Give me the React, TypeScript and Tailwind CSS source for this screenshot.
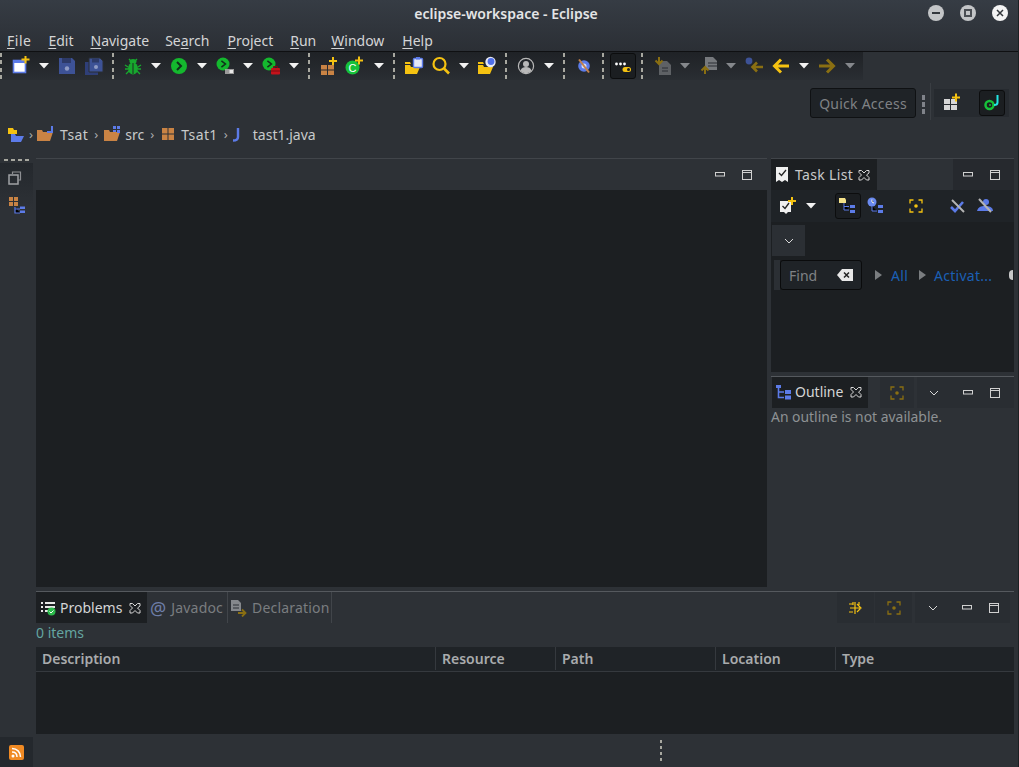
import React from "react";

const S = ({ w = 20, h = 20, vb, className, children }: { w?: number; h?: number; vb?: string; className?: string; children: React.ReactNode }) => (
  <svg width={w} height={h} viewBox={vb ?? `0 0 ${w} ${h}`} className={`shrink-0 ${className ?? ""}`} fill="none">{children}</svg>
);

const Plus = ({ x, y, c = "#f5c211" }: { x: number; y: number; c?: string }) => (
  <path d={`M${x - 4} ${y}h8M${x} ${y - 4}v8`} stroke={c} strokeWidth="2" />
);
const NewIcon = () => (<S><rect x="3.5" y="4.5" width="12" height="12" fill="#fff" stroke="#5c7be8" strokeWidth="1.6" /><rect x="3" y="4" width="13" height="3" fill="#5c7be8" /><Plus x={15.5} y={3.5} /></S>);
const Save = () => (<S><path d="M2 2h13l3 3v13H2z" fill="#3d5296" /><rect x="5" y="2" width="9" height="5" fill="#2d3a68" /><circle cx="10" cy="12.5" r="2.2" fill="#8f9bc4" /></S>);
const SaveAll = () => (<S><path d="M1 6h13v13H1z" fill="#2f3f78" /><path d="M5 2h11l3 3v11H5z" fill="#3d5296" stroke="#2b2f35" /><rect x="8" y="2.5" width="7" height="4" fill="#2d3a68" /><circle cx="12" cy="11" r="2" fill="#8f9bc4" /></S>);
const Bug = () => (<S><path d="M6 3l2 2M14 3l-2 2M2 9l3 2M18 9l-3 2M2 13h3M18 13h-3M3 18l3-3M17 18l-3-3" stroke="#17a82e" strokeWidth="1.4" /><ellipse cx="10" cy="5.5" rx="3.5" ry="2.5" fill="#17a82e" /><ellipse cx="10" cy="12.5" rx="5" ry="6" fill="#17a82e" /><path d="M10 7v11" stroke="#1f2a22" /></S>);
const Chev = ({ x, y, s = 1 }: { x: number; y: number; s?: number }) => (
  <path d={`M${x - 2 * s} ${y - 4 * s}l4 ${4 * s}l-4 ${4 * s}`} stroke="#10301a" strokeWidth={2 * s} fill="none" />
);
const Run = () => (<S><circle cx="10" cy="10" r="8" fill="#14b82e" /><Chev x={10} y={10} /></S>);
const Cov = () => (<S><circle cx="8" cy="8" r="6.5" fill="#14b82e" /><Chev x={8} y={8} s={0.8} /><rect x="10.5" y="13.5" width="8" height="4" fill="#e8e8e8" stroke="#9a9a9a" /><rect x="11" y="14" width="3.5" height="3" fill="#9a9a9a" /></S>);
const Ext = () => (<S><circle cx="8" cy="8" r="6.5" fill="#14b82e" /><Chev x={8} y={8} s={0.8} /><rect x="10" y="12" width="9" height="6.5" rx="1" fill="#c4121b" /><path d="M12.5 12v-1.5h4V12M10 15h9" stroke="#7d0a10" /></S>);
const Pkg = () => (<S><path d="M3 9h6v4.500H3zM10 9h6v4.500h-6zM3 14.500h6V19H3zM10 14.500h6V19h-6z" fill="#c98344" /><Plus x={15} y={5} /></S>);
const NewC = () => (<S><circle cx="8.5" cy="11.5" r="7" fill="#16c13a" /><text x="8.5" y="15.5" textAnchor="middle" fontSize="11" fontFamily="Liberation Sans" fill="#fff">C</text><Plus x={15} y={4.5} /></S>);
const Folder = () => (<path d="M1 18V9h5l1 2h9l-3 7z M1 8V6h5l1 2z" fill="#f5c211" />);
const OpenType = () => (<S><Folder /><rect x="9.5" y="2.5" width="9" height="9" rx="1" fill="#e6e9f7" stroke="#5c7be8" strokeWidth="1.4" /><rect x="12" y="1" width="4" height="2.5" fill="#5c7be8" /></S>);
const Search = () => (<S><circle cx="8.5" cy="8" r="6" stroke="#f5c211" strokeWidth="2.2" /><path d="M13 12.5l5 5" stroke="#f5c211" strokeWidth="2.6" /></S>);
const OpenTask = () => (<S><Folder /><circle cx="13.5" cy="6" r="5.2" fill="#e8eaf4" /><circle cx="14" cy="5.5" r="3.4" fill="#4f6fe8" /></S>);
const Avatar = () => (<S vb="0 0 20 20"><circle cx="10" cy="10" r="7.6" stroke="#b8b8b8" strokeWidth="1.2" /><circle cx="10" cy="8" r="3" fill="#b8b8b8" /><path d="M4.5 14.5c1-3 3-3.5 5.5-3.5s4.5.5 5.500 3.500c-1.500 1.800-3.500 2.600-5.500 2.600s-4-.8-5.500-2.600z" fill="#b8b8b8" /></S>);
const SkipB = () => (<S><circle cx="10" cy="10" r="5.8" fill="#5c7be8" /><circle cx="10" cy="10" r="2.5" fill="#d8def8" /><path d="M5 3.5l10 13" stroke="#c4824a" strokeWidth="2" /></S>);
const Mark = () => (<S w={26} h={26}><circle cx="6.5" cy="11" r="1.4" fill="#fff" /><circle cx="10.5" cy="11" r="1.4" fill="#fff" /><circle cx="14.5" cy="11" r="1.4" fill="#fff" /><rect x="12.5" y="14" width="8.5" height="5" rx="2.5" fill="#f5c211" /><circle cx="18.5" cy="16.5" r="1.5" fill="#1c1f22" /></S>);
const NextAnn = () => (<S><path d="M6 5h8l4 4v10H6z" fill="#5e6165" /><path d="M9 12h6M9 15h6" stroke="#2b2f35" /><path d="M6 1v6M2.5 4.5L6 8l3.5-3.5" stroke="#8a6f12" strokeWidth="2" /></S>);
const PrevAnn = () => (<S><path d="M6 1h8l4 4v9H6z" fill="#76797d" /><path d="M9 7h9M9 10h9" stroke="#2b2f35" /><path d="M6 18v-6M2.5 14.5L6 11l3.5 3.5" stroke="#8a6f12" strokeWidth="2" /></S>);
const Arrow = ({ c, dir }: { c: string; dir: "l" | "r" }) => (
  <S>{dir === "l"
    ? <path d="M18 10H4M10 3.5L3.5 10l6.5 6.5" stroke={c} strokeWidth="3" />
    : <path d="M2 10h14M10 3.5l6.5 6.5-6.5 6.5" stroke={c} strokeWidth="3" />}</S>
);
const LastEdit = () => (<S><circle cx="4" cy="5" r="3.4" fill="#3d5296" /><path d="M18 11H8M12 6.5L7.5 11l4.5 4.5" stroke="#8a6f12" strokeWidth="2.6" /></S>);
const Drop = ({ dim, className }: { dim?: boolean; className?: string }) => (
  <svg width="10" height="6" viewBox="0 0 10 6" className={`shrink-0 ${className ?? ""}`}><path d="M0 0h10L5 5.5z" fill={dim ? "#85888c" : "#f2f2f2"} /></svg>
);
const Grip = ({ className }: { className?: string }) => (
  <div className={`flex h-[26px] w-[3px] shrink-0 flex-col justify-between ${className ?? ""}`}>
    {[0, 1, 2, 3].map((i) => <div key={i} className="h-[4px] w-[2px] bg-[#a8a8a0]" />)}
  </div>
);
const Tree = () => (<S w={18} h={16}><path d="M1 1h5v3H1z" fill="#5c7be8" /><path d="M3.5 4v9.5H9M3.5 8H9" stroke="#5c7be8" strokeWidth="1.6" /><path d="M10 6h6v4h-6zM10 11.5h6v4h-6z" fill="#5c7be8" /></S>);
const CloseX = () => (
  <svg width="12" height="12" viewBox="0 0 12 12" className="shrink-0"><path d="M1 1.500h2.500L6 4l2.500-2.500H11v2.500L8.500 6 11 8.500V11H8.500L6 8.500 3.500 11H1V8.500L3.500 6 1 3.500z" stroke="#d8d8d8" strokeWidth="1" fill="none" /></svg>
);
const Min = () => (<svg width="10" height="5" viewBox="0 0 10 5" className="shrink-0"><rect x=".5" y=".5" width="9" height="3.500" stroke="#d0d0d0" fill="none" /></svg>);
const Max = () => (<svg width="10" height="10" viewBox="0 0 10 10" className="shrink-0"><rect x=".5" y=".5" width="9" height="9" stroke="#d0d0d0" fill="none" /><path d="M0 2.500h10" stroke="#d0d0d0" /></svg>);
const ChevD = () => (<svg width="10" height="6" viewBox="0 0 10 6" className="shrink-0"><path d="M1 1l4 4 4-4" stroke="#d8d8d8" fill="none" /></svg>);
const Focus = ({ c }: { c: string }) => (
  <svg width="14" height="14" viewBox="0 0 14 14" className="shrink-0"><path d="M1 4.500V1h3.500M9.500 1H13v3.500M13 9.500V13H9.500M4.500 13H1V9.500" stroke={c} strokeWidth="1.300" fill="none" /><circle cx="7" cy="7" r="1.800" fill={c} /></svg>
);
const U = ({ children }: { children: React.ReactNode }) => <span className="underline underline-offset-2 decoration-1">{children}</span>;
const Sep = () => <span className="text-[13px] text-[#a9abad]">›</span>;

export default function App() {
  return (
    <div className="relative flex h-[767px] w-[1019px] flex-col overflow-hidden border-r border-[#1d2023] bg-[#2d3136] font-['Noto_Sans',sans-serif] text-[14px] text-[#c6c8ca]">
      {/* title + menu */}
      <div className="flex h-[52px] shrink-0 flex-col border-b border-[#0f1012] bg-gradient-to-b from-[#363c44] to-[#2b2f35]">
        <div className="relative flex h-[27px] shrink-0 items-center justify-center pr-[6px]">
          <span className="text-[14px] font-semibold text-[#e4e5e6]">eclipse-workspace - Eclipse</span>
          <div className="absolute right-[10px] top-[5px] flex gap-[16px]">
            <div className="flex h-4 w-4 items-center justify-center rounded-full bg-[#c3c5c7]"><div className="h-[2px] w-2 bg-[#33373c]" /></div>
            <div className="flex h-4 w-4 items-center justify-center rounded-full bg-[#c3c5c7]"><div className="h-2 w-2 border-2 border-[#4a4e53]" /></div>
            <div className="flex h-4 w-4 items-center justify-center rounded-full bg-[#f4f4f4]">
              <svg width="8" height="8" viewBox="0 0 8 8"><path d="M1 1l6 6M7 1L1 7" stroke="#33373c" strokeWidth="1.500" /></svg>
            </div>
          </div>
        </div>
        <div className="flex h-[24px] items-center pl-[7px] pt-[2px] text-[14px] text-[#d4d5d6]">
          <span className="tracking-[0.5px]"><U>F</U>ile</span>
          <span className="ml-[17px]"><U>E</U>dit</span>
          <span className="ml-[17px]"><U>N</U>avigate</span>
          <span className="ml-[16px]">Se<U>a</U>rch</span>
          <span className="ml-[18px]"><U>P</U>roject</span>
          <span className="ml-[17px]"><U>R</U>un</span>
          <span className="ml-[15px]"><U>W</U>indow</span>
          <span className="ml-[18px]"><U>H</U>elp</span>
        </div>
      </div>

      {/* toolbar */}
      <div className="flex h-[28px] w-[863px] shrink-0 items-center bg-gradient-to-b from-[#1f2226] to-[#2a2e33]">
        <Grip />
        <div className="ml-[7px]"><NewIcon /></div><Drop className="ml-[9px]" />
        <div className="ml-[8px]"><Save /></div>
        <div className="ml-[7px]"><SaveAll /></div>
        <Grip className="ml-[8px]" />
        <div className="ml-[8px]"><Bug /></div><Drop className="ml-[8px]" />
        <div className="ml-[8px]"><Run /></div><Drop className="ml-[8px]" />
        <div className="ml-[8px]"><Cov /></div><Drop className="ml-[8px]" />
        <div className="ml-[8px]"><Ext /></div><Drop className="ml-[8px]" />
        <Grip className="ml-[9px]" />
        <div className="ml-[7px]"><Pkg /></div>
        <div className="ml-[6px]"><NewC /></div><Drop className="ml-[10px]" />
        <Grip className="ml-[9px]" />
        <div className="ml-[8px]"><OpenType /></div>
        <div className="ml-[7px]"><Search /></div><Drop className="ml-[8px]" />
        <div className="ml-[8px]"><OpenTask /></div>
        <Grip className="ml-[8px]" />
        <div className="ml-[8px]"><Avatar /></div><Drop className="ml-[8px]" />
        <Grip className="ml-[9px]" />
        <div className="ml-[8px]"><SkipB /></div>
        <Grip className="ml-[8px]" />
        <div className="ml-[5px] h-[26px] w-[26px] rounded-[3px] border border-[#0c0d0e] bg-[#1b1e21]"><div className="-m-px"><Mark /></div></div>
        <Grip className="ml-[5px]" />
        <div className="ml-[9px]"><NextAnn /></div><Drop dim className="ml-[7px]" />
        <div className="ml-[9px]"><PrevAnn /></div><Drop dim className="ml-[7px]" />
        <div className="ml-[9px]"><LastEdit /></div>
        <div className="ml-[6px]"><Arrow c="#f5c211" dir="l" /></div><Drop className="ml-[8px]" />
        <div className="ml-[8px]"><Arrow c="#8a6f12" dir="r" /></div><Drop dim className="ml-[8px]" />
      </div>

      {/* quick access row */}
      <div className="flex h-[40px] shrink-0 items-start justify-end pr-[9px]">
        <div className="mt-[8px] flex h-[30px] w-[106px] items-center justify-center rounded-[3px] border border-[#0f1113] bg-[#1f2327] text-[14px] tracking-[0.25px] text-[#7f8285]">Quick Access</div>
        <div className="ml-[6px] mr-[3px] mt-[3px] flex h-[37px] flex-col items-center gap-[2px] border-r border-[#3a3e43] pr-[5px] pt-[12px]">
          <div className="h-[5px] w-[3px] bg-[#80838a]" />
          <div className="h-[5px] w-[3px] bg-[#80838a]" />
          <div className="h-[5px] w-[3px] bg-[#80838a]" />
        </div>
        <div className="mt-[9px] flex h-[28px] w-[75px] items-center bg-[#262a2f]">
          <div className="ml-[8px] w-[20px]">
            <S><path d="M2 6h6v5H2zM9 6h6v5H9zM2 12h6v5H2zM9 12h6v5H9z" fill="#d6d6d6" /><Plus x={14} y={4.500} /></S>
          </div>
          <div className="ml-[17px] flex h-[26px] w-[26px] items-center justify-center rounded-[3px] border border-[#0c0d0e] bg-[#1b1e21]">
            <S><circle cx="7.500" cy="12" r="4" stroke="#16c13a" strokeWidth="2.500" /><circle cx="8" cy="12" r="1" fill="#16c13a" /><path d="M15.500 2v7.500c0 1.800-1 2.500-3.500 2.500" stroke="#22e6e6" strokeWidth="2" /></S>
          </div>
        </div>
      </div>

      {/* breadcrumb */}
      <div className="flex h-[38px] shrink-0 items-center pb-[10px] pl-[8px] text-[14px] text-[#c8cacb]">
        <S w={18} h={18}><path d="M0 3h5l1 2h3v4H0z" fill="#f5c211" /><path d="M3 17V9h4l1 2h8l-3 6z" fill="#5c7be8" /></S>
        <span className="ml-[3px]"><Sep /></span>
        <S w={18} h={16} className="ml-[4px]"><path d="M0 15V4h5l1 2h10l-3 9z" fill="#c98344" /><path d="M15 0v6h-5" stroke="#5c7be8" strokeWidth="2" /></S>
        <span className="ml-[5px] tracking-[0.4px]">Tsat</span>
        <span className="ml-[6px]"><Sep /></span>
        <S w={18} h={16} className="ml-[6px]"><path d="M0 15V4h5l1 2h10l-3 9z" fill="#c98344" /><path d="M9 0h3v3H9zM13 0h3v3h-3zM13 4h3v3h-3zM9 4h3v2H9z" fill="#5c7be8" /></S>
        <span className="ml-[3px]">src</span>
        <span className="ml-[6px]"><Sep /></span>
        <S w={14} h={14} className="ml-[7px]"><path d="M1 1h5.500v5.500H1zM7.500 1H13v5.500H7.500zM1 7.500h5.500V13H1zM7.500 7.500H13V13H7.500z" fill="#c98344" /></S>
        <span className="ml-[6px] tracking-[0.4px]">Tsat1</span>
        <span className="ml-[6px]"><Sep /></span>
        <S w={10} h={15} className="ml-[3px]"><path d="M7 1v9c0 2.500-1.500 3.500-5 3.500" stroke="#5c7be8" strokeWidth="2.400" /></S>
        <span className="ml-[12px]">tast1.java</span>
      </div>

      {/* main */}
      <div className="flex h-[576px] shrink-0">
        {/* left trim */}
        <div className="flex w-[33px] shrink-0 flex-col">
          <div className="flex h-[5px] items-start gap-[3px] pl-[4px] pt-[1px]">
            {[0, 1, 2, 3].map((i) => <div key={i} className="h-[2px] w-[4px] bg-[#a8a8a0]" />)}
          </div>
          <div className="flex flex-1 flex-col items-center bg-gradient-to-b from-[#24282d] to-[#2d3136] to-[8%]">
            <svg width="14" height="14" viewBox="0 0 14 14" className="mr-[3px] mt-[8px]"><path d="M4.500 3V1h8v8h-2" stroke="#8d8f92" strokeWidth="1.200" fill="none" /><rect x="1" y="4" width="9" height="9" stroke="#a0a2a5" strokeWidth="1.500" fill="none" /></svg>
            <div className="ml-[2px] mt-[12px]">
              <svg width="18" height="17" viewBox="0 0 18 17"><path d="M0 0h4v4H0zM5 0h4v4H5zM0 5h4v4H0zM5 5h4v4H5z" fill="#c98344" /><path d="M6 10v6h5M6 12h5" stroke="#5c7be8" strokeWidth="1.200" /><path d="M11 9.500h5v2.500h-5zM11 13.500h5v2.500h-5z" fill="#5c7be8" /></svg>
            </div>
          </div>
        </div>

        <div className="ml-[3px] flex min-w-0 flex-1 flex-col pr-[4px]">
          {/* upper */}
          <div className="flex h-[429px] shrink-0 gap-[4px]">
            <div className="flex w-[731px] shrink-0 flex-col">
              <div className="flex h-[32px] shrink-0 items-center justify-end gap-[17px] border-t border-[#41454a] pr-[15px]">
                <Min /><Max />
              </div>
              <div className="flex-1 bg-[#1c1f22]" />
            </div>
            {/* right column */}
            <div className="flex min-w-0 flex-1 flex-col">
              <div className="flex h-[214px] shrink-0 flex-col">
                <div className="flex h-[32px] shrink-0 border-t border-[#41454a]">
                  <div className="flex h-full w-[106px] items-center bg-[#1c1f22] pl-[5px] text-[#c8cacb]">
                    <svg width="12" height="15" viewBox="0 0 12 15" className="shrink-0"><path d="M0 0h12v15L9 13l-3 2-3-2-3 2z" fill="#f0f0f0" /><path d="M3 6l2.500 2.500L10 3" stroke="#222" strokeWidth="1.300" fill="none" /></svg>
                    <span className="ml-[7px] tracking-[0.35px]">Task List</span>
                    <span className="ml-[5px]"><CloseX /></span>
                  </div>
                  <div className="ml-auto flex h-full w-[61px] items-center justify-center gap-[17px] bg-[#26292e] pr-[4px]"><Min /><Max /></div>
                </div>
                <div className="flex h-[32px] shrink-0 items-center bg-[#1f2327] pl-[9px]">
                  <svg width="18" height="18" viewBox="0 0 18 18" className="shrink-0"><path d="M0 4h11v11l-3 0-2 2-2-2H0z" fill="#f0f0f0" /><path d="M2.500 9l2.500 2.500L9 6" stroke="#222" strokeWidth="1.300" fill="none" /><Plus x={12} y={4} /></svg>
                  <Drop className="ml-[8px]" />
                  <div className="ml-[19px] flex h-[26px] w-[26px] items-center justify-center rounded-[3px] border border-[#0c0d0e] bg-[#1b1e21]">
                    <svg width="18" height="18" viewBox="0 0 18 18"><path d="M0 1h6l1 2v3H0z" fill="#f5e28a" /><path d="M5 6v7h5M5 9.500h5" stroke="#5c7be8" /><path d="M11 8h5v3h-5zM11 13h5v3h-5z" fill="#5c7be8" /></svg>
                  </div>
                  <svg width="18" height="18" viewBox="0 0 18 18" className="ml-[6px] shrink-0"><circle cx="5" cy="5" r="4.500" fill="#6a8af0" /><path d="M5 2.500V5l2 1" stroke="#fff" /><path d="M5 9v5h5" stroke="#5c7be8" /><path d="M11 8h5v3h-5zM11 13h5v3h-5z" fill="#5c7be8" /></svg>
                  <div className="ml-[24px]"><Focus c="#f5c211" /></div>
                  <svg width="16" height="16" viewBox="0 0 16 16" className="ml-[27px] shrink-0"><path d="M1 9l4 4 8-9" stroke="#5c7be8" strokeWidth="2.600" fill="none" /><path d="M2 2l12 12" stroke="#b4b4b4" strokeWidth="2" /></svg>
                  <svg width="18" height="16" viewBox="0 0 18 16" className="ml-[10px] shrink-0"><circle cx="10" cy="4" r="3" fill="#5c7be8" /><path d="M1 13c1-4 4-5 8-5s8 1 8 5z" fill="#5c7be8" /><path d="M3 1l12 13" stroke="#b4b4b4" strokeWidth="2" /></svg>
                </div>
                <div className="relative flex min-h-0 flex-1 flex-col overflow-hidden bg-[#1c1f22]">
                  <div className="ml-px mt-[3px] flex h-[31px] w-[33px] items-center justify-center bg-[#2b2f34]"><ChevD /></div>
                  <div className="mt-[4px] flex h-[30px] items-center">
                    <div className="ml-[3px] h-[30px] w-[6px] shrink-0 bg-[#2b2f34]" />
                    <div className="flex h-[30px] w-[82px] shrink-0 items-center justify-between rounded-[3px] border border-[#0a0b0c] bg-[#1f2327] pl-[8px] pr-[8px] text-[#7f8285]">
                      Find
                      <svg width="16" height="12" viewBox="0 0 16 12"><path d="M0 6l5-6h11v12H5z" fill="#e8e8e8" /><path d="M7 3.500l5 5M12 3.500l-5 5" stroke="#222" strokeWidth="1.500" /></svg>
                    </div>
                    <span className="ml-[13px] h-0 w-0 border-y-[5px] border-l-[7px] border-y-transparent border-l-[#7a7d80]" />
                    <span className="ml-[9px] tracking-[0.3px] text-[#1b5fb5]">All</span>
                    <span className="ml-[11px] h-0 w-0 border-y-[5px] border-l-[7px] border-y-transparent border-l-[#7a7d80]" />
                    <span className="ml-[8px] whitespace-nowrap tracking-[0.25px] text-[#1b5fb5]">Activat...</span>
                    <div className="ml-[17px] h-[10px] w-[4px] shrink-0 rounded-l-full bg-[#c8c8c8]" />
                  </div>
                </div>
              </div>
              {/* outline */}
              <div className="mt-[4px] flex min-h-0 flex-1 flex-col border-t border-[#55595e]">
                <div className="flex h-[31px] shrink-0">
                  <div className="ml-px flex h-full w-[96px] items-center bg-[#1c1f22] pb-[2px] pl-[3px] text-[#d4d5d6]">
                    <Tree />
                    <span className="ml-[2px]">Outline</span>
                    <span className="ml-[7px]"><CloseX /></span>
                  </div>
                  <div className="ml-[12px] flex h-full w-[34px] items-center justify-center bg-[#292d32]"><Focus c="#8a6f12" /></div>
                  <div className="ml-[3px] flex h-full flex-1 items-center bg-[#292d32] pl-[12px]">
                    <ChevD />
                    <div className="ml-[24px]"><Min /></div>
                    <div className="ml-[17px]"><Max /></div>
                  </div>
                </div>
                <div className="-mt-px text-[13.9px] leading-[20px] text-[#8e9194]">An outline is not available.</div>
              </div>
            </div>
          </div>

          {/* bottom */}
          <div className="mt-[4px] flex min-h-0 flex-1 flex-col">
            <div className="flex h-[32px] shrink-0 items-stretch border-t border-[#55595e]">
              <div className="flex w-[111px] items-center bg-[#1c1f22] pl-[5px] text-[#d4d5d6]">
                <svg width="16" height="16" viewBox="0 0 16 16" className="shrink-0"><path d="M0 2h2v2H0zM4 2h10v2H4zM0 6h2v2H0zM4 6h10v2H4zM0 10h2v2H0zM4 10h4v2H4z" fill="#e8e8e8" /><circle cx="10.500" cy="11.500" r="4" fill="#2bb84a" /><path d="M8.500 11.500l1.500 1.500 2.500-2.500" stroke="#fff" fill="none" /></svg>
                <span className="ml-[3px]">Problems</span>
                <span className="ml-[7px]"><CloseX /></span>
              </div>
              <div className="flex w-[81px] items-center border-r border-[#41454a] pl-[3px] text-[#7a7d80]">
                <span className="text-[18px] leading-none text-[#6d7ea8]">@</span>
                <span className="ml-[5px] tracking-[0.2px]">Javadoc</span>
              </div>
              <div className="flex w-[104px] items-center border-r border-[#41454a] text-[#7a7d80]">
                <svg width="18" height="18" viewBox="0 0 18 18" className="ml-[2px] shrink-0"><path d="M1 1h7l3 3v8H1z" fill="#85888c" /><path d="M3 6h6M3 9h6" stroke="#2b2f35" /><path d="M8 14h7M12 10.500l3.500 3.500-3.500 3.500" stroke="#8a6f12" strokeWidth="1.800" fill="none" /></svg>
                <span className="ml-[4px] tracking-[0.2px]">Declaration</span>
              </div>
              <div className="ml-[505px] flex w-[37px] items-center justify-center bg-[#292d32]">
                <svg width="14" height="12" viewBox="0 0 14 12"><path d="M0 2h4M0 10h4M1 6h10M8 2l4 4-4 4M6 0v12M10 0v3M4 0v3" stroke="#f5c211" strokeWidth="1.200" fill="none" /></svg>
              </div>
              <div className="ml-px flex w-[37px] items-center justify-center bg-[#292d32]"><Focus c="#8a6f12" /></div>
              <div className="ml-[3px] flex w-[95px] items-center bg-[#292d32] pl-[13px]">
                <ChevD />
                <div className="ml-[24px]"><Min /></div>
                <div className="ml-[17px]"><Max /></div>
              </div>
            </div>
            <div className="flex h-[24px] shrink-0 items-center pb-[6px] text-[#64a5a0]">0 items</div>
            <div className="flex h-[25px] shrink-0 items-center border-b border-[#35393e] bg-[#1f2327] pb-px font-semibold text-[#a9abad]">
              <div className="flex h-full w-[400px] items-center border-r border-[#35393e] pl-[6px]">Description</div>
              <div className="flex h-full w-[120px] items-center border-r border-[#35393e] pl-[6px]">Resource</div>
              <div className="flex h-full w-[160px] items-center border-r border-[#35393e] pl-[6px]">Path</div>
              <div className="flex h-full w-[120px] items-center border-r border-[#35393e] pl-[6px]">Location</div>
              <div className="flex h-full flex-1 items-center pl-[6px]">Type</div>
            </div>
            <div className="flex-1 bg-[#1c1f22]" />
          </div>
        </div>
      </div>

      {/* status */}
      <div className="flex h-[33px] shrink-0 items-center">
        <div className="flex h-[30px] w-[33px] items-center justify-center self-end bg-[#24282d]">
          <svg width="15" height="15" viewBox="0 0 15 15"><rect width="15" height="15" rx="2" fill="#f08a24" /><circle cx="4" cy="11" r="1.500" fill="#fff" /><path d="M3 7c3 0 5 2 5 5M3 3.500c5 0 8.500 3.500 8.500 8.500" stroke="#fff" strokeWidth="1.500" fill="none" /></svg>
        </div>
        <div className="ml-[627px] flex h-[22px] w-[2px] flex-col justify-between">
          {[0, 1, 2, 3].map((i) => <div key={i} className="h-[3px] w-[2px] bg-[#a8a8a0]" />)}
        </div>
      </div>
    </div>
  );
}
